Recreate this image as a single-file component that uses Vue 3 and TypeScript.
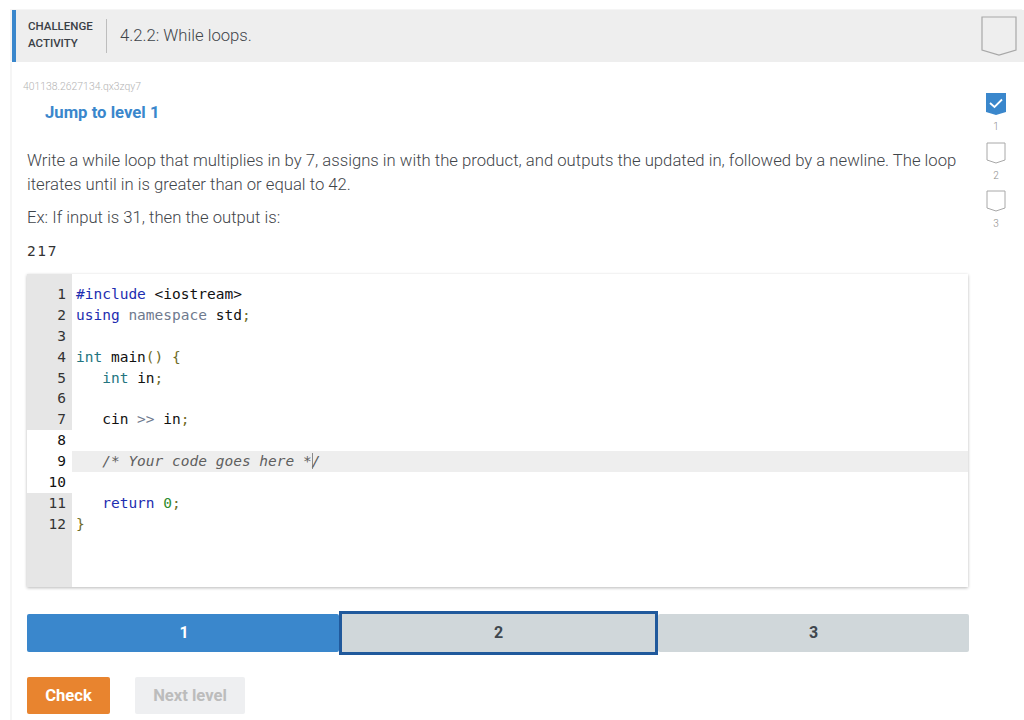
<script setup lang="ts">
interface Tok { t: string; c?: string }
interface Line { n: number; toks: Tok[]; editable?: boolean; active?: boolean }
const lines: Line[] = [
  { n: 1, toks: [{ t: '#include', c: 'kw' }, { t: ' <iostream>' }] },
  { n: 2, toks: [{ t: 'using', c: 'kw' }, { t: ' ' }, { t: 'namespace', c: 'ns' }, { t: ' std' }, { t: ';', c: 'pn' }] },
  { n: 3, toks: [] },
  { n: 4, toks: [{ t: 'int', c: 'ty' }, { t: ' main' }, { t: '()', c: 'pn' }, { t: ' ' }, { t: '{', c: 'pn' }] },
  { n: 5, toks: [{ t: '   ' }, { t: 'int', c: 'ty' }, { t: ' in' }, { t: ';', c: 'pn' }] },
  { n: 6, toks: [] },
  { n: 7, toks: [{ t: '   cin ' }, { t: '>>', c: 'ns' }, { t: ' in' }, { t: ';', c: 'pn' }] },
  { n: 8, toks: [], editable: true },
  { n: 9, toks: [{ t: '   ' }, { t: '/* Your code goes here *', c: 'cm' }, { t: '/', c: 'cm cursor' }], editable: true, active: true },
  { n: 10, toks: [], editable: true },
  { n: 11, toks: [{ t: '   ' }, { t: 'return', c: 'kw' }, { t: ' ' }, { t: '0', c: 'num' }, { t: ';', c: 'pn' }] },
  { n: 12, toks: [{ t: '}', c: 'pn' }] },
]
const levels = [
  { n: 1, state: 'done' },
  { n: 2, state: 'focus' },
  { n: 3, state: '' },
]
const shield = 'M1,1 H19 V18 L10,21 L1,18 Z'
</script>

<template>
  <div class="page">
    <header class="head">
      <div class="kind">CHALLENGE<br />ACTIVITY</div>
      <div class="title">4.2.2: While loops.</div>
      <svg class="big-shield" width="36" height="40" viewBox="0 0 36 40">
        <path d="M1 1 H35 V34 L18 39 L1 34 Z" fill="none" stroke="#a8a8a8" stroke-width="1.2" />
      </svg>
    </header>
    <div class="columns">
      <main class="main">
        <div class="ident">401138.2627134.qx3zqy7</div>
        <div class="jump">Jump to level 1</div>
        <p class="prompt">Write a while loop that multiplies in by 7, assigns in with the product, and outputs the updated in, followed by a newline. The loop iterates until in is greater than or equal to 42.</p>
        <p class="ex">Ex: If input is 31, then the output is:</p>
        <pre class="sample">217</pre>
        <div class="editor">
          <div v-for="l in lines" :key="l.n" class="row">
            <div class="num-cell" :class="{ open: l.editable }">{{ l.n }}</div>
            <div class="code" :class="{ active: l.active }"><span v-for="(k, i) in l.toks" :key="i" :class="k.c">{{ k.t }}</span></div>
          </div>
          <div class="row filler"><div class="num-cell"></div></div>
        </div>
        <div class="levels">
          <div v-for="l in levels" :key="l.n" class="level" :class="l.state">{{ l.n }}</div>
        </div>
        <div class="actions">
          <button class="check">Check</button>
          <button class="next">Next level</button>
        </div>
      </main>
      <aside class="side">
        <div class="badge">
          <svg width="20" height="22" viewBox="0 0 20 22">
            <path d="M0,0 H20 V19 L10,22 L0,19 Z" fill="#3a87cc" />
            <path d="M4 10 L8.5 14 L16 6.5" fill="none" stroke="#fff" stroke-width="1.8" />
          </svg>
          <span>1</span>
        </div>
        <div class="badge">
          <svg width="20" height="22" viewBox="0 0 20 22"><path :d="shield" fill="none" stroke="#a8a8a8" /></svg>
          <span>2</span>
        </div>
        <div class="badge">
          <svg width="20" height="22" viewBox="0 0 20 22"><path :d="shield" fill="none" stroke="#a8a8a8" /></svg>
          <span>3</span>
        </div>
      </aside>
    </div>
  </div>
</template>

<style>
html, body { margin: 0; background: #fff; }
</style>

<style scoped>
.page {
  width: 1024px;
  height: 720px;
  box-sizing: border-box;
  padding: 10px 0 0 12px;
  overflow: hidden;
  background: #fff;
  font-family: Roboto, sans-serif;
  color: #41474c;
  position: relative;
}
.head {
  height: 52px;
  display: flex;
  align-items: center;
  background: #eeeeee;
  border-left: 4px solid #3a87cc;
  box-sizing: border-box;
  box-shadow: -2px -1px 0 #f5f5f5;
}
.kind {
  margin-left: 12px;
  width: 65px;
  font-size: 11.5px;
  font-weight: 500;
  line-height: 17px;
  color: #3a4046;
  height: 37px;
}
.title {
  margin-left: 13px;
  padding-left: 13px;
  height: 34px;
  line-height: 33px;
  border-left: 1px solid #bdbdbd;
  font-size: 16.7px;
  font-weight: 300;
  flex: 1;
  color: #3f454a;
}
.big-shield { margin-right: 7px; }
.columns {
  display: flex;
  min-height: 660px;
  box-shadow: -2px 0 0 #f5f5f5;
}
.main { width: 957px; flex: none; padding-left: 15px; box-sizing: border-box; }
.ident {
  margin: 19px 0 0 -4px;
  font-size: 10.4px;
  line-height: 12px;
  font-weight: 300;
  color: #b4b4b4;
}
.jump {
  margin: 10px 0 0 18px;
  font-size: 16.7px;
  line-height: 20px;
  font-weight: 700;
  color: #3a87cc;
}
.prompt {
  margin: 26px 0 0;
  width: 942px;
  font-size: 16.7px;
  line-height: 24px;
  font-weight: 300;
  color: #3f454a;
}
.ex {
  margin: 9px 0 0;
  font-size: 16.7px;
  line-height: 24px;
  font-weight: 300;
  color: #3f454a;
}
.sample {
  margin: 11px 0 0;
  font-family: "DejaVu Sans Mono", monospace;
  font-size: 14.5px;
  line-height: 20px;
  letter-spacing: 1.6px;
  color: #333;
}
.editor {
  margin-top: 13px;
  width: 941px;
  height: 313px;
  display: flex;
  flex-direction: column;
  background: linear-gradient(#e6e6e6, #e6e6e6) left top / 45px 100% no-repeat, #fff;
  box-shadow: 0 1px 3px rgba(0, 0, 0, 0.28);
  border-top: 10px solid transparent;
  box-sizing: border-box;
  background-origin: border-box;
  background-clip: border-box;
  font-family: "DejaVu Sans Mono", monospace;
  font-size: 14.5px;
  line-height: 20.9px;
  color: #111;
}
.row { display: flex; height: 20.9px; flex: none; }
.row.filler { flex: 1; }
.num-cell {
  width: 39px;
  flex: none;
  padding-right: 6px;
  text-align: right;
  color: #333;
}
.num-cell.open { background: #fff; color: #111; }
.code { flex: 1; padding-left: 4px; white-space: pre; }
.code.active { background: #eeeeee; }
.kw { color: #1d2db0; }
.ns { color: #6f7a8e; }
.ty { color: #23757f; }
.pn { color: #6f6c28; }
.num { color: #2e8b2e; }
.cm { color: #5f5f5f; font-style: italic; }
.cursor { box-shadow: inset 1px 0 0 #8a8a8a; }
.levels {
  display: flex;
  align-items: flex-start;
  margin-top: 27px;
  width: 942px;
  height: 38px;
}
.level {
  flex: 1;
  height: 38px;
  display: flex;
  align-items: center;
  justify-content: center;
  background: #d0d7da;
  font-size: 16px;
  font-weight: 700;
  color: #3f474e;
  box-sizing: border-box;
  border-radius: 2px;
  padding-bottom: 2px;
}
.level.done { background: #3a87cc; color: #fff; flex: none; width: 312px; padding-left: 2px; }
.level.focus {
  flex: none;
  width: 319px;
  height: 44px;
  margin-top: -3px;
  border: 3px solid #20599c;
  border-radius: 0;
}
.actions { display: flex; gap: 25px; margin-top: 25px; }
button {
  height: 37px;
  border: 0;
  border-radius: 2px;
  font-family: Roboto, sans-serif;
  font-size: 16.6px;
  font-weight: 700;
  padding: 0;
}
.check { width: 83px; background: #e8842f; color: #fff; }
.next { width: 110px; background: #eeeff1; color: #bcbcbc; }
.side {
  display: flex;
  flex-direction: column;
  align-items: center;
  width: 20px;
  margin-left: 17px;
  padding-top: 31px;
}
.badge {
  display: flex;
  flex-direction: column;
  align-items: center;
  height: 48.7px;
  color: #8c8c8c;
  font-size: 10px;
  font-weight: 300;
}
.badge svg { display: block; }
.badge span { margin-top: 6px; line-height: 12px; }
</style>
